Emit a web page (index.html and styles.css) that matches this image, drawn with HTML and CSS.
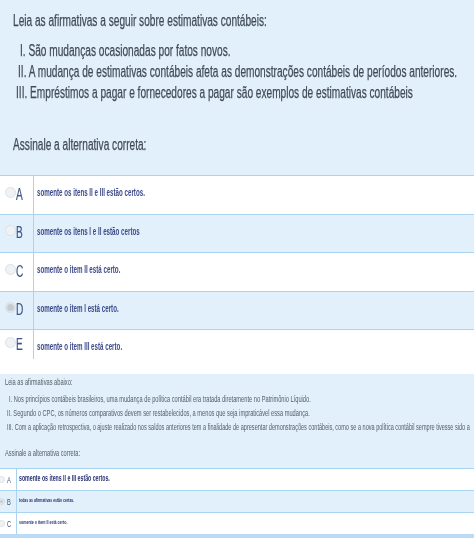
FILE: index.html
```html
<!DOCTYPE html>
<html lang="pt-BR">
<head>
    <meta charset="UTF-8">
    <title>Estimativas contábeis</title>
    <link rel="stylesheet" href="styles.css">
</head>
<body>
    <section class="questao">
        <div class="enunciado">
            <p class="titulo">Leia as afirmativas a seguir sobre estimativas contábeis:</p>
            <p class="item item1">I. São mudanças ocasionadas por fatos novos.</p>
            <p class="item item2">II. A mudança de estimativas contábeis afeta as demonstrações contábeis de períodos anteriores.</p>
            <p class="item item3">III. Empréstimos a pagar e fornecedores a pagar são exemplos de estimativas contábeis</p>
            <p class="assinale">Assinale a alternativa correta:</p>
        </div>
        <div class="opcao">
            <div class="marca"><span class="radio"></span><span class="letra">A</span></div>
            <div class="texto">somente os itens II e III estão certos.</div>
        </div>
        <div class="opcao azul">
            <div class="marca"><span class="radio"></span><span class="letra">B</span></div>
            <div class="texto">somente os itens I e II estão certos</div>
        </div>
        <div class="opcao">
            <div class="marca"><span class="radio"></span><span class="letra">C</span></div>
            <div class="texto">somente o item II está certo.</div>
        </div>
        <div class="opcao azul">
            <div class="marca"><span class="radio marcado"></span><span class="letra">D</span></div>
            <div class="texto">somente o item I está certo.</div>
        </div>
        <div class="opcao ultima">
            <div class="marca"><span class="radio"></span><span class="letra">E</span></div>
            <div class="texto">somente o item III está certo.</div>
        </div>
    </section>

    <section class="questao menor">
        <div class="enunciado">
            <p class="titulo">Leia as afirmativas abaixo:</p>
            <p class="item item1">I. Nos princípios contábeis brasileiros, uma mudança de política contábil era tratada diretamente no Patrimônio Líquido.</p>
            <p class="item item2">II. Segundo o CPC, os números comparativos devem ser restabelecidos, a menos que seja impraticável essa mudança.</p>
            <p class="item item3">III. Com a aplicação retrospectiva, o ajuste realizado nos saldos anteriores tem a finalidade de apresentar demonstrações contábeis, como se a nova política contábil sempre tivesse sido a</p>
            <p class="assinale">Assinale a alternativa correta:</p>
        </div>
        <div class="opcao">
            <div class="marca"><span class="radio"></span><span class="letra">A</span></div>
            <div class="texto">somente os itens II e III estão certos.</div>
        </div>
        <div class="opcao azul">
            <div class="marca"><span class="radio marcado"></span><span class="letra">B</span></div>
            <div class="texto mini">todas as afirmativas estão certas.</div>
        </div>
        <div class="opcao">
            <div class="marca"><span class="radio"></span><span class="letra">C</span></div>
            <div class="texto mini mini2">somente o item II está certo.</div>
        </div>
        <div class="rodape"></div>
    </section>
</body>
</html>
```

FILE: styles.css
```css
html, body {
    margin: 0;
    padding: 0;
}

body {
    width: 474px;
    height: 538px;
    overflow: hidden;
    background-color: white;
    font-family: "Liberation Sans", sans-serif;
    color: #414b55;
}

/* nao ha fonte condensada instalada, entao o texto e apertado com scaleX */
p, .letra, .texto {
    width: fit-content;
    transform-origin: 0 50%;
    transform: scaleX(0.633);
}

p {
    margin: 0;
    white-space: nowrap;
    -webkit-text-stroke: 0.25px #414b55;
}

.questao {
    filter: blur(0.4px);
}

.enunciado {
    background-color: #e1f0fb;
    height: 175px;
    padding-left: 13px;
    box-sizing: border-box;
    overflow: hidden;
    font-size: 16px;
}

.titulo {
    padding-top: 11px;
    line-height: 20px;
}

.item {
    line-height: 21px;
}

.item1 {
    margin-top: 9px;
    margin-left: 7px;
}

.item2 {
    margin-left: 5px;
}

.item3 {
    margin-left: 3px;
}

.assinale {
    margin-top: 32px;
    line-height: 20px;
}

.opcao {
    display: flex;
    height: 38.5px;
    background-color: white;
    border-top: 1px solid #a8d4f2;
    box-sizing: border-box;
}

.opcao.azul {
    background-color: #e1f0fb;
}

.opcao.ultima {
    height: 30px;
}

.marca {
    width: 34px;
    flex-shrink: 0;
    display: flex;
    align-items: center;
    padding-left: 5px;
    box-sizing: border-box;
    border-right: 1px solid #a8d4f2;
}

.radio {
    width: 9px;
    height: 9px;
    flex-shrink: 0;
    border-radius: 50%;
    border: 1px solid #dde2e6;
    background-color: #f0f3f5;
    margin-top: -5px;
}

.radio.marcado {
    background-color: #c4ccd2;
    box-shadow: inset 0 0 0 1px #e6eaec;
}

.letra {
    font-size: 16px;
    color: #3d5488;
    -webkit-text-stroke: 0.2px #3d5488;
}

.texto {
    margin: 11px 0 0 3px;
    font-size: 10px;
    font-weight: bold;
    color: #3d4a8c;
    white-space: nowrap;
    transform: scaleX(0.62);
}

/* segunda questao, imagem menor */
.menor {
    margin-top: 15px;
}

.menor .enunciado {
    height: 94px;
    padding-left: 5px;
    font-size: 9px;
    color: #555d66;
}

.menor p {
    -webkit-text-stroke: 0;
}

.menor .titulo {
    padding-top: 2px;
    line-height: 13px;
}

.menor .item {
    line-height: 14px;
}

.menor .item1 {
    margin-top: 3px;
    margin-left: 4px;
}

.menor .item2 {
    margin-left: 2px;
}

.menor .item3 {
    margin-left: 2px;
    transform: scaleX(0.618);
}

.menor .assinale {
    margin-top: 13px;
    line-height: 13px;
}

.menor .opcao {
    height: 22px;
}

.menor .marca {
    width: 17px;
    padding-left: 0;
}

.menor .radio {
    width: 5px;
    height: 5px;
    margin-left: -2px;
    margin-top: 0;
}

.menor .letra {
    margin-left: 2px;
    font-size: 9px;
    -webkit-text-stroke: 0;
}

.menor .texto {
    margin: 4px 0 0 2px;
    font-size: 9px;
    color: #26306f;
    transform: scaleX(0.58);
}

.menor .texto.mini {
    margin-top: 6px;
    font-size: 5px;
    transform: scaleX(0.69);
}

.menor .texto.mini2 {
    transform: scaleX(0.72);
}

.rodape {
    height: 10px;
    background-color: #bcdcf6;
}
```
